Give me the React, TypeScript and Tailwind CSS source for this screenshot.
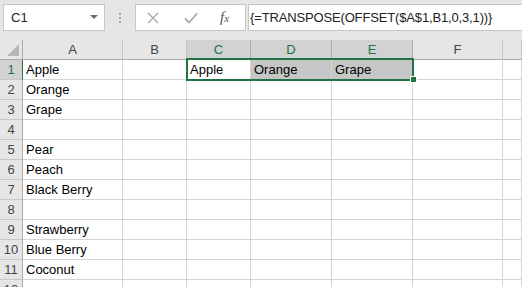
import React from "react";

const cols = ["A", "B", "C", "D", "E", "F", ""];
const selCols = ["C", "D", "E"];

const colA: Record<number, string> = {
  1: "Apple",
  2: "Orange",
  3: "Grape",
  5: "Pear",
  6: "Peach",
  7: "Black Berry",
  9: "Strawberry",
  10: "Blue Berry",
  11: "Coconut",
};

const font = { fontFamily: '"Liberation Sans", Arial, sans-serif' };

function Cell({ children, cls = "" }: { children?: React.ReactNode; cls?: string }) {
  return (
    <div
      className={`h-[20px] border-r border-b border-[#d4d4d4] pl-[3px] text-[13px] leading-[19px] text-black whitespace-nowrap overflow-hidden ${cls}`}
    >
      {children}
    </div>
  );
}

export default function App() {
  const rows = Array.from({ length: 12 }, (_, i) => i + 1);
  return (
    <div className="w-[522px] h-[287px] overflow-hidden bg-[#e6e6e6] select-none" style={font}>
      {/* name box + formula bar */}
      <div className="flex items-start h-[40px] pt-[4px] pl-[3px]">
        <div className="w-[102px] h-[27px] bg-white border border-[#c6c6c6] flex items-center justify-between pl-[7px] pr-[6px]">
          <span className="text-[13px] text-[#222]">C1</span>
          <svg width="8" height="5" viewBox="0 0 8 5">
            <path d="M0 0h8L4 4z" fill="#6b6b6b" />
          </svg>
        </div>
        <div className="w-[30px] h-[27px] flex flex-col items-center justify-center gap-[2px]">
          <div className="w-[2px] h-[2px] bg-[#a6a6a6]" />
          <div className="w-[2px] h-[2px] bg-[#a6a6a6]" />
          <div className="w-[2px] h-[2px] bg-[#a6a6a6]" />
        </div>
        <div className="w-[111px] h-[27px] bg-white border border-[#c6c6c6] flex items-center">
          <svg className="ml-[11px]" width="12" height="12" viewBox="0 0 12 12">
            <path d="M1 1l10 10M11 1L1 11" stroke="#a8a8a8" strokeWidth="1.4" />
          </svg>
          <svg className="ml-[25px]" width="14" height="12" viewBox="0 0 14 12">
            <path d="M1 6.5l4 4L13 1.5" stroke="#a8a8a8" strokeWidth="1.8" fill="none" />
          </svg>
          <span
            className="ml-[22px] text-[15px] italic text-[#555]"
            style={{ fontFamily: '"Liberation Serif", "Times New Roman", serif' }}
          >
            f<span className="text-[11px]">x</span>
          </span>
        </div>
        <div className="ml-[2px] flex-1 h-[27px] bg-white border border-[#c6c6c6] border-r-0 flex items-center pl-[1px]">
          <span className="text-[13px] text-[#222] tracking-[-0.15px]">
            {"{=TRANSPOSE(OFFSET($A$1,B1,0,3,1))}"}
          </span>
        </div>
      </div>

      {/* grid */}
      <div className="relative">
        <div className="grid grid-cols-[23px_100px_64px_64px_81px_81px_90px_1fr] bg-white">
          {/* header row */}
          <div className="h-[20px] bg-[#e6e6e6] border-r border-b border-[#ababab] relative">
            <svg className="absolute right-[3px] bottom-[3px]" width="12" height="12" viewBox="0 0 12 12">
              <path d="M12 0V12H0z" fill="#b7b7b7" />
            </svg>
          </div>
          {cols.map((c, i) => {
            const sel = selCols.includes(c);
            return (
              <div
                key={i}
                className={`h-[20px] border-r border-b flex items-center justify-center text-[13px] ${
                  sel
                    ? "bg-[#d2d2d2] text-[#217346] border-r-[#ababab] border-b-[#217346]"
                    : "bg-[#e6e6e6] text-[#444] border-[#c6c6c6] border-b-[#ababab]"
                }`}
              >
                {c}
              </div>
            );
          })}

          {rows.map((r) => (
            <React.Fragment key={r}>
              <div
                className={`h-[20px] border-r border-b flex items-center justify-center text-[13px] ${
                  r === 1
                    ? "bg-[#d2d2d2] text-[#217346] border-r-[#217346] border-b-[#c6c6c6]"
                    : "bg-[#e6e6e6] text-[#444] border-[#c6c6c6] border-r-[#ababab]"
                }`}
              >
                {r}
              </div>
              <Cell>{colA[r]}</Cell>
              <Cell />
              <Cell>{r === 1 ? "Apple" : null}</Cell>
              <Cell cls={r === 1 ? "bg-[#c6c6c6]" : ""}>{r === 1 ? "Orange" : null}</Cell>
              <Cell cls={r === 1 ? "bg-[#c6c6c6]" : ""}>{r === 1 ? "Grape" : null}</Cell>
              <Cell />
              <Cell />
            </React.Fragment>
          ))}
        </div>

        {/* selection border C1:E1 */}
        <div className="absolute left-[186px] top-[18px] w-[228px] h-[23px] border-2 border-[#217346] pointer-events-none" />
        <div className="absolute left-[410px] top-[36px] w-[7px] h-[7px] bg-[#217346] border border-white" />
      </div>
    </div>
  );
}
